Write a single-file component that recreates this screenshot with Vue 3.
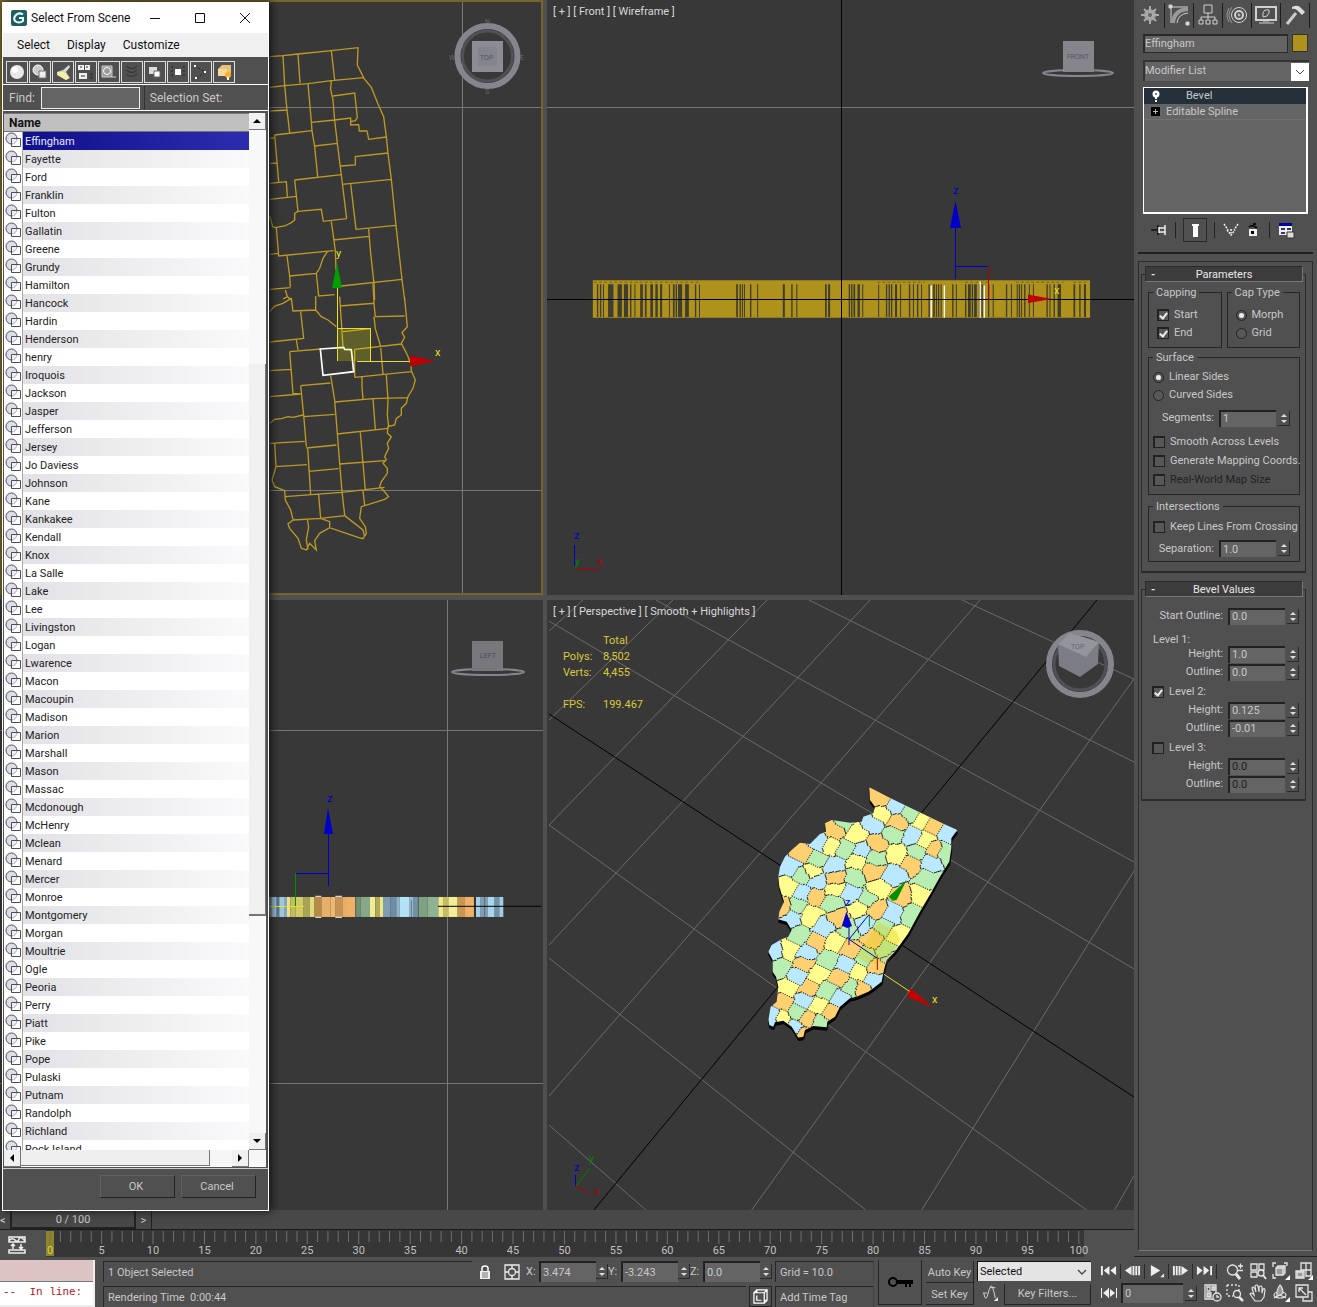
<script setup>
import { ref } from 'vue'

const names = [
  'Effingham', 'Fayette', 'Ford', 'Franklin', 'Fulton', 'Gallatin', 'Greene', 'Grundy', 'Hamilton', 'Hancock',
  'Hardin', 'Henderson', 'henry', 'Iroquois', 'Jackson', 'Jasper', 'Jefferson', 'Jersey', 'Jo Daviess', 'Johnson',
  'Kane', 'Kankakee', 'Kendall', 'Knox', 'La Salle', 'Lake', 'Lee', 'Livingston', 'Logan', 'Lwarence', 'Macon',
  'Macoupin', 'Madison', 'Marion', 'Marshall', 'Mason', 'Massac', 'Mcdonough', 'McHenry', 'Mclean', 'Menard',
  'Mercer', 'Monroe', 'Montgomery', 'Morgan', 'Moultrie', 'Ogle', 'Peoria', 'Perry', 'Piatt', 'Pike', 'Pope',
  'Pulaski', 'Putnam', 'Randolph', 'Richland', 'Rock Island'
]
const selected = ref('Effingham')
const frames = Array.from({ length: 101 }, (_, i) => i)
const frameX = (i) => (0.4 + i * 0.991).toFixed(2) + '%'

const levels = [
  { title: 'Level 1:', check: null, rows: [['Height:', '1.0'], ['Outline:', '0.0']] },
  { title: 'Level 2:', check: true, rows: [['Height:', '0.125'], ['Outline:', '-0.01']] },
  { title: 'Level 3:', check: false, rows: [['Height:', '0.0'], ['Outline:', '0.0']] }
]
const coords = [['X:', '3.474'], ['Y:', '-3.243'], ['Z:', '0.0']]

/* Gaps between extruded walls in the front wireframe: [x, width] */
const gaps = [
  [50, 4], [59, 4], [68, 3], [83, 16], [111, 13], [130, 12], [148, 4], [161, 3], [178, 8], [192, 5], [208, 8],
  [223, 7], [237, 6], [263, 3], [275, 5], [283, 4], [290, 12], [311, 11], [340, 4], [352, 3], [462, 5], [472, 4],
  [479, 3], [485, 3], [503, 4], [524, 3], [600, 6], [625, 4], [640, 3], [725, 5], [734, 6], [795, 4], [802, 4],
  [809, 5], [821, 7], [835, 3], [882, 3], [905, 4], [913, 4], [920, 4], [932, 6], [947, 3], [973, 4], [985, 3],
  [997, 4], [1009, 3], [1031, 4], [1045, 5], [1053, 3], [1059, 4], [1067, 3], [1101, 4], [1112, 3], [1139, 4],
  [1148, 8], [1159, 4], [1166, 8], [1180, 8], [1190, 3], [1207, 4], [1221, 3], [1260, 4], [1275, 3], [1292, 3],
  [1298, 4], [1305, 3], [1314, 4], [1328, 3], [1340, 3], [1380, 4], [1389, 3], [1401, 4], [1413, 10], [1460, 5],
  [1477, 4], [1491, 6]
]
/* Shaded strips of the left view: [x, width, colour] */
const strips = [
  [0, 12, '#7d9bb2'], [12, 12, '#99bfd8'], [24, 10, '#6c8ba3'], [34, 14, '#9fc8df'], [48, 9, '#86a6bb'],
  [57, 10, '#e8e28e'], [67, 15, '#c4bc5e'], [82, 25, '#d2ca68'], [107, 18, '#aaa552'], [125, 13, '#dedc7d'],
  [138, 22, '#b68a48'], [160, 28, '#e6b06a'], [188, 15, '#efb870'], [203, 20, '#c49355'], [223, 14, '#e8ae66'],
  [237, 26, '#efb067'], [263, 15, '#729072'], [278, 28, '#86a889'], [306, 16, '#f0ec93'], [322, 14, '#b0a955'],
  [336, 9, '#ede888'], [345, 22, '#7f9cb1'], [367, 18, '#6e8da4'], [385, 10, '#8fb4ca'], [395, 30, '#b2e2f5'],
  [425, 10, '#98bfd5'], [435, 16, '#7590a5'], [451, 28, '#7da183'], [479, 32, '#8fb391'], [511, 14, '#eeea90'],
  [525, 16, '#c4bb64'], [541, 28, '#f2ef96'], [569, 20, '#c99850'], [589, 29, '#efb067'], [618, 6, '#333333'],
  [624, 14, '#a4d0e7'], [638, 22, '#7e9fb5'], [660, 20, '#a7d6ec'], [680, 14, '#7292aa'], [694, 12, '#a2cfe4']
]

/* County centres on the extruded map */
const seeds = `o420,85 b465,105 g512,130 y545,148 o580,165 b625,185 y425,128 b400,160 o475,155 g460,190 b520,197
y555,210 o582,236 g615,245 o285,178 y350,192 o410,218 g310,150 y270,225 g315,235 b365,238 y470,250 g530,243
o515,278 b570,275 b238,212 o185,245 g230,268 b280,285 y350,270 g405,262 o395,300 b465,312 g560,325 b150,290
y215,300 g185,315 b230,335 o285,322 g345,318 y410,355 y535,370 o490,375 y285,355 b330,370 y145,345 b190,365
o222,372 g280,395 g385,385 b455,430 g515,430 o410,415 y355,415 g170,405 o130,410 b155,440 y210,435 b250,470
o295,440 y470,495 g430,470 g175,495 o230,512 y280,515 g330,475 o330,535 b370,460 o400,500 g440,540 g375,560
y355,605 b105,540 y145,535 b200,545 g265,565 b315,580 g120,590 o190,580 b172,615 y232,610 o300,620 o405,590
b400,625 y145,650 o205,655 g258,660 g335,650 o362,655 b300,685 b190,685 o130,695 y235,705 g170,725 o270,725
o200,745 b100,730 y125,740 b165,770 o185,790 g240,755 b455,560`
  .split(/\s+/)
  .map((s) => {
    const [x, y] = s.slice(1).split(',').map(Number)
    const dx = x - 388
    const dy = y - 30
    return { c: s[0], s: 0.86 * dx + 0.517 * dy, t: 0.904 * dy - 0.438 * dx }
  })
const fills = { o: '#ffd070', b: '#b9e8ff', g: '#b9eeb2', y: '#fffd8e' }

/* Square-ish counties: a fine lattice along the map's own axes, each node owned by the nearest centre */
const STEP = 4
const S0 = -120
const T0 = -20
const COLS = 124
const ROWS = 212
const owner = Array.from({ length: ROWS }, (_, r) =>
  Array.from({ length: COLS }, (_, c) => {
    const s = S0 + c * STEP
    const t = T0 + r * STEP
    let best = 0
    let min = Infinity
    seeds.forEach((p, i) => {
      const a = Math.abs(p.s - s)
      const b = Math.abs(p.t - t)
      const d = Math.max(a, b) + Math.min(a, b) * 0.1
      if (d < min) { min = d; best = i }
    })
    return best
  })
)
const areas = { o: '', b: '', g: '', y: '' }
let borders = ''
for (let r = 0; r < ROWS; r++) {
  let start = 0
  for (let c = 1; c <= COLS; c++) {
    if (c === COLS || owner[r][c] !== owner[r][start]) {
      areas[seeds[owner[r][start]].c] += `M${S0 + start * STEP} ${T0 + r * STEP}h${(c - start) * STEP + 1}v5h${-(c - start) * STEP - 1}z`
      start = c
    }
  }
}
for (let r = 1; r < ROWS; r++) {
  for (let c = 0; c < COLS; c++) {
    if (owner[r][c] === owner[r - 1][c]) continue
    let n = c
    while (n < COLS && owner[r][n] !== owner[r - 1][n]) n++
    borders += `M${S0 + c * STEP} ${T0 + r * STEP}h${(n - c) * STEP}`
    c = n
  }
}
for (let c = 1; c < COLS; c++) {
  for (let r = 0; r < ROWS; r++) {
    if (owner[r][c] === owner[r][c - 1]) continue
    let n = r
    while (n < ROWS && owner[n][c] !== owner[n][c - 1]) n++
    borders += `M${S0 + c * STEP} ${T0 + r * STEP}v${(n - r) * STEP}`
    r = n
  }
}
const stateOutline =
  '388,52 452,85 545,130 612,162 652,180 634,205 634,235 628,275 600,320 575,365 540,425 505,490 465,545 440,570 432,600 425,635 400,655 385,665 350,680 330,685 300,710 285,740 262,755 260,772 220,768 195,780 190,800 175,803 155,770 130,752 105,757 100,770 88,765 85,750 92,710 110,695 115,650 108,620 98,605 98,570 85,545 95,525 125,508 145,500 155,480 140,455 115,448 118,425 132,395 118,350 115,320 120,290 135,260 155,240 180,218 210,222 240,192 258,185 255,160 275,150 330,158 365,155 370,140 400,130 405,110 390,90'
</script>

<template>
  <div class="app">
    <div class="workspace">
      <main class="stage">
        <div class="views">
          <section class="view active" aria-label="Top">
            <svg viewBox="0 0 543 595" preserveAspectRatio="xMinYMin slice">
              <path d="M462.5 0V595M0 107.5H543M0 490.5H543" stroke="#777" fill="none" />
              <g fill="none" stroke="#bd9a24" stroke-width="4">
                <g transform="translate(268 0) scale(.3333)">
                  <path d="M5,170L45,167 90,162 190,152 270,143 268,195 288,235 310,262 330,312 347,350 355,410 360,460 370,538 384,676 402,838 410,900M5,262L50,257 120,251 190,242 288,233M45,167L50,257 57,330 65,398M90,162L96,250M190,152L200,240M120,251L130,365 132,392 140,440 149,530M190,242L188,268 195,300 200,360 208,430 220,525 236,656M195,288L260,279 268,352 262,362 248,365M130,367L200,360 248,354 248,375 272,374 274,393 297,393 302,418 355,411M140,438L208,430M5,333L57,330M20,405L132,392M5,415L18,414M20,405L32,545M5,490L27,489M5,550L55,545 58,590M5,598L85,589M80,540L220,524M80,540L90,634 160,628 166,664 236,656M218,498L262,495 262,470 360,459M222,553L370,538M248,552L264,688 384,676M90,634L80,640 80,660 70,668 50,678 22,683 14,680 5,648M25,683L32,768 197,752M190,664L202,752 204,810M196,720L302,709M302,687L308,760 318,850 320,900M5,763L30,760M57,768L65,828 67,862M65,828L145,820 155,805 165,775 178,755M145,820L152,888 200,884M5,868L67,863M52,870L58,890 45,897M58,890L70,900M220,858L402,838" />
                </g>
                <g transform="translate(268 300) scale(.3333)">
                  <path d="M5,35L20,18 45,10 70,-5 75,33 143,30 143,-12M143,30L160,50 180,60 205,80M98,35L107,115 5,126M85,118L90,150M65,155L160,147M65,155L75,280 98,282M5,212L68,208M5,290L98,282M98,257L187,249M98,257L107,345 115,440M188,227L200,300 215,490 222,575 230,645M107,350L200,343M5,370L20,358 40,356 60,350 75,352 105,345M5,430L110,424M20,430L24,500 117,494M115,444L205,435M119,444L128,585M122,514L212,506M24,500L12,540 20,560 50,572 52,600 68,630 75,658M52,590L220,577 350,562M152,584L158,655M75,660L158,655 230,647M215,18L318,10 322,50 410,48M215,-10L225,140M225,95L308,86M318,10L315,-50M410,-5L418,80 402,98 410,112 400,130 418,165 428,190 430,212 442,240 435,265 420,290 415,310 400,325 400,345 385,355 380,375 360,380 358,400 370,410 358,430 362,445 350,470 355,480 345,490 358,505 358,520 340,545 335,560 345,570 362,590 350,598 280,620 275,655 292,680 295,700 285,716 270,712 185,683 155,700 140,722 145,750 125,730 115,750 100,745 90,715 65,685 60,672 75,660M118,658L122,680 115,720 120,748M158,655L185,665 185,683M230,647L285,690 290,710M260,148L400,132M318,50L322,86 338,140 345,222M260,232L430,215M260,148L260,232M282,232L282,260 285,298M355,225L360,300 358,345 362,380M200,306L315,296 420,293M315,296L322,388M207,402L362,385M277,397L292,570M215,492L350,482M285,572L290,615" />
                  <path d="M157,147L227,142 230,148 250,149 257,215 165,226Z" stroke="#fff" stroke-width="5" />
                </g>
              </g>
              <path d="M337 328h34v33h-34z" fill="#ffff00" fill-opacity=".2" />
              <path d="M337.500 288V361M337 328.500H370.500V361M357 361.500H410" stroke="#e8e020" fill="none" />
              <path d="M337 263l5 25h-10z" fill="#00a000" />
              <path d="M410 355.500L435 361 410 366.500z" fill="#c00000" />
              <text x="336" y="257" fill="#e8e020">y</text>
              <text x="435" y="356" fill="#e8e020">x</text>
              <circle cx="487.500" cy="56" r="30" fill="none" stroke="#85858d" stroke-width="6" />
              <circle cx="487.500" cy="56" r="25" fill="none" stroke="#505056" stroke-width="3" />
              <path d="M472 41h31v31h-31z" fill="#8c8c94" />
              <path d="M478 47h19v19h-19z" fill="#84848c" />
              <text x="480" y="60" class="cube" fill="#55555c">TOP</text>
              <g class="cube" fill="#66666c"><text x="485" y="24">N</text><text x="485" y="94">S</text><text x="449" y="60">W</text><text x="520" y="60">E</text></g>
            </svg>
          </section>

          <section class="view" aria-label="Front">
            <svg viewBox="547 0 587 595" preserveAspectRatio="xMinYMin slice">
              <path d="M547 107.500H1134" stroke="#777" />
              <g transform="translate(580 170) scale(.338)">
                <path d="M38 326H1509V437H38z" fill="#ae921c" />
                <rect v-for="g in gaps" :key="g[0]" :x="g[0]" y="338" :width="g[1]" height="97" fill="#403e2e" />
                <path d="M42 332H350M880 332H1020M1140 332H1210M1290 332H1430M1460 332H1500" stroke="#6f6224" stroke-width="3" stroke-dasharray="8 7" />
                <path d="M1039 342V437M1078 342V437M1184 330V437M1196 342V437" stroke="#fff" stroke-width="4" />
              </g>
              <path d="M841.500 0V595M547 299.500H1134" stroke="#000" />
              <path d="M955.500 228V279M955 266.500H988" stroke="#0000c8" fill="none" />
              <path d="M988.500 266V300" stroke="#b00000" />
              <path d="M955.500 201l5.500 27h-11z" fill="#0000c8" />
              <path d="M1028 294.500L1052 299 1028 303z" fill="#c00000" />
              <text x="953" y="194" fill="#0000c8">z</text>
              <text x="1054" y="294" fill="#e8e020">x</text>
              <path d="M574.500 568V545" stroke="#0000c8" /><path d="M575 568.500H600" stroke="#b00000" /><path d="M574 568l4-6" stroke="#008000" />
              <text x="574" y="539" fill="#0000c8">z</text><text x="597" y="565" fill="#b00000">x</text><text x="575" y="565" fill="#008000">y</text>
              <ellipse cx="1078" cy="73" rx="35" ry="3" fill="none" stroke="#85858d" stroke-width="2" />
              <path d="M1063 41h31v31h-31z" fill="#85858b" />
              <text x="1067" y="59" class="cube" fill="#55555c">FRONT</text>
            </svg>
            <p class="caption">[ + ] [ Front ] [ Wireframe ]</p>
          </section>

          <section class="view" aria-label="Left">
            <svg viewBox="0 600 543 611" preserveAspectRatio="xMinYMin slice">
              <path d="M447.500 600V1211M0 730.500H543M0 1083.500H543" stroke="#777" fill="none" />
              <g transform="translate(268 600) scale(.3333)">
                <rect v-for="s in strips" :key="s[0]" :x="s[0]" y="891" :width="s[1]" height="60" :fill="s[2]" />
                <path d="M30 891V951M263 891V951M430 900V951M451 891V951M650 891V951" stroke="#444a4c" stroke-width="2" />
                <path d="M142 889H160M202 889H222M142 952H160M202 952H222" stroke="#fff" stroke-width="3" />
                <path d="M510 919H820" stroke="#000" stroke-width="3" />
              </g>
              <path d="M268 906.500H304" stroke="#e8e020" />
              <path d="M328.500 833V886M328 873.500H295" stroke="#0000c8" fill="none" />
              <path d="M295.500 873V906" stroke="#009000" />
              <path d="M328 808l5 26h-9z" fill="#0000c8" />
              <text x="327" y="802" fill="#0000c8">z</text>
              <ellipse cx="488" cy="672" rx="36" ry="3" fill="none" stroke="#85858d" stroke-width="2" />
              <path d="M472 641h31v30h-31z" fill="#77777c" />
              <text x="480" y="658" class="cube" fill="#4a4a50">LEFT</text>
            </svg>
          </section>

          <section class="view" aria-label="Perspective">
            <svg viewBox="547 600 587 611" preserveAspectRatio="xMinYMin slice">
              <path fill="none" stroke="#6b6b6b" d="M962 600L1134 679M809 600L1134 762M656 600L1134 862M549 621L1134 969M549 825L1088 1211M549 958L867 1211M549 1125L647 1211M549 631L583 600M549 720L673 600M549 825L767 600M549 945L870 600M549 1096L980 600M751 1211L1134 679M921 1211L1134 871M1114 1211L1134 1176" />
              <path fill="none" stroke="#000" d="M549 714L1134 1097M593 1211L1097 600" />
              <defs><clipPath id="state"><polygon :points="stateOutline" /></clipPath></defs>
              <g transform="translate(740 770) scale(.3333)">
                <polygon :points="stateOutline" fill="#050505" stroke="#050505" stroke-width="3" transform="translate(1 9)" />
                <g clip-path="url(#state)">
                  <g transform="matrix(.9 .436 -.515 .857 388 30)">
                    <path v-for="(d, k) in areas" :key="k" :d="d" :fill="fills[k]" />
                    <path :d="borders" fill="none" stroke="#222" stroke-width="3" stroke-dasharray="3 4" />
                  </g>
                </g>
                <path d="M415 455L470 485 480 510 440 580 380 580 350 560z" fill="#d8c800" fill-opacity=".3" />
                <path d="M327 508L387 434M327 508L412 565M327 525V470" stroke="#0000b0" stroke-width="3" fill="none" />
                <path d="M388 434V470" stroke="#008000" stroke-width="3" />
                <path d="M412 565V600" stroke="#b00000" stroke-width="3" />
                <path d="M432 613L510 665" stroke="#e8e020" stroke-width="3" />
                <path d="M500 330L446 380 458 392 470 390z" fill="#009000" />
                <path d="M319 425L336 468 322 474 306 467z" fill="#0000c8" />
                <path d="M512 655L578 712 502 680z" fill="#c80000" />
              </g>
              <text x="845" y="906" fill="#0000c8">z</text>
              <text x="932" y="1003" fill="#e8e020">x</text>
              <path d="M575.500 1186V1175" stroke="#0000c8" /><path d="M576 1186l14-18" stroke="#008000" /><path d="M576 1186l14 8" stroke="#b00000" />
              <text x="574" y="1171" fill="#0000c8">z</text><text x="589" y="1162" fill="#008000">y</text><text x="594" y="1195" fill="#b00000">x</text>
              <circle cx="1080" cy="664" r="31" fill="none" stroke="#85858d" stroke-width="6" />
              <circle cx="1080" cy="664" r="26" fill="none" stroke="#505056" stroke-width="3" />
              <path d="M1058 644L1070 633 1099 642 1098 664 1080 677 1059 666z" fill="#7c7c84" />
              <path d="M1058 644L1070 633 1099 642 1086 657z" fill="#94949c" />
              <text x="1071" y="649" class="cube" fill="#66666e">TOP</text>
            </svg>
            <p class="caption">[ + ] [ Perspective ] [ Smooth + Highlights ]</p>
            <dl class="stats">
              <dt></dt><dd>Total</dd>
              <dt>Polys:</dt><dd>8,502</dd>
              <dt>Verts:</dt><dd>4,455</dd>
              <dt class="fps">FPS:</dt><dd class="fps">199.467</dd>
            </dl>
          </section>
        </div>

        <div class="slider">
          <button class="step">&lt;</button>
          <button class="thumb">0 / 100</button>
          <button class="step">&gt;</button>
        </div>

        <div class="trackbar">
          <button class="curve" aria-label="Open mini curve editor">
            <svg width="18" height="18" viewBox="0 0 18 18" fill="none" stroke="#eee" stroke-width="1.500"><path d="M1 1h16v5H1zM1 14h16v3H1zM1 5q3-4 6-1t4-1 6 2M5 13V8M3 10l2-2 2 2M13 8v5M11 11l2 2 2-2" /></svg>
          </button>
          <svg class="ruler">
            <rect x="0" y="1" width="8" height="25" fill="#8d8526" />
            <line v-for="i in frames" :key="i" :x1="frameX(i)" :x2="frameX(i)" y1="1" :y2="i % 5 ? 12 : 14" stroke="#707070" />
            <text v-for="i in 21" :key="'t' + i" :x="frameX((i - 1) * 5)" y="24" text-anchor="middle" :fill="i === 1 ? '#d8cf50' : '#c0c0c0'">{{ (i - 1) * 5 }}</text>
          </svg>
        </div>
      </main>

      <aside class="panel">
        <nav class="tabs">
          <button aria-label="Create"><svg viewBox="0 0 22 22"><circle cx="11" cy="11" r="6" fill="#9a9a9a" /><path d="M11 2v18M2 11h18M5 5l12 12M17 5L5 17" stroke="#aaa" stroke-width="2" /><circle cx="11" cy="11" r="2" fill="#666" /></svg></button>
          <button aria-label="Modify"><svg viewBox="0 0 22 22" fill="none" stroke="#d0d0d0"><path d="M3 3v16M3 3h17" /><path d="M5 19Q6 6 20 5" stroke-width="4" stroke="#999" /><path d="M9 19Q10 10 20 9" /><path d="M1 1h3v3H1zM18 18h3v3h-3z" fill="#ddd" /></svg></button>
          <button aria-label="Hierarchy"><svg viewBox="0 0 22 22" fill="none" stroke="#d0d0d0"><path d="M7 1h8v8H7zM11 9v6M4 16v-3h14v3M2 16h4v4H2zM9 16h4v4H9zM16 16h4v4h-4z" /></svg></button>
          <button aria-label="Motion"><svg viewBox="0 0 22 22" fill="none" stroke="#d0d0d0"><circle cx="13" cy="11" r="7.500" /><circle cx="13" cy="11" r="4" stroke-width="2" /><circle cx="13" cy="11" r="1" /><path d="M6 3q-6 8 0 16M3 4q-4 7 0 14" stroke="#999" /></svg></button>
          <button aria-label="Display"><svg viewBox="0 0 22 22" fill="none" stroke="#d0d0d0"><path d="M1 3h20v13H1z" stroke-width="2" /><path d="M4 19h15M8 17h6" /><path d="M8 13V9q1-4 6-3v3q-1 4-6 4z" /></svg></button>
          <button aria-label="Utilities"><svg viewBox="0 0 22 22"><path d="M3 20L12 9" stroke="#ccc" stroke-width="3" /><path d="M8 3q6-3 9 1l4 4-3 3-4-4q-3-3-6-2z" fill="#ddd" /></svg></button>
        </nav>
        <div class="name-row">
          <input class="name" value="Effingham" aria-label="Object name" />
          <button class="swatch" aria-label="Object colour"></button>
        </div>
        <div class="drop modlist">
          <select aria-label="Modifier list"><option>Modifier List</option></select>
          <svg viewBox="0 0 18 18" fill="none" stroke="#444"><path d="M5 7l4 4 4-4" /></svg>
        </div>
        <ul class="stack">
          <li class="on"><svg width="10" height="12" viewBox="0 0 10 12"><circle cx="5" cy="4" r="3.500" fill="#fff" /><path d="M5 7v2M5 10v2" stroke="#fff" stroke-width="2" /><circle cx="5" cy="4" r="1" fill="#555" /></svg><span>Bevel</span></li>
          <li><svg width="10" height="10" viewBox="0 0 10 10"><path d="M0 0h9v9H0z" /><path d="M4.500 2v5M2 4.500h5" stroke="#bbb" /></svg><span>Editable Spline</span></li>
        </ul>
        <div class="stack-tools">
          <button aria-label="Pin stack"><svg viewBox="0 0 18 18" fill="none" stroke="#eee"><path d="M1 9h6M8 4v10" stroke="#111" stroke-width="1.500" /><path d="M9 6v6M9 7h6M9 11h6M15 4v10" stroke-width="1.500" /></svg></button>
          <i></i>
          <button class="down" aria-label="Show end result"><svg viewBox="0 0 18 18"><path d="M6 3h7v2h-1v11H7V5H6z" fill="#fff" /></svg></button>
          <i></i>
          <button aria-label="Make unique"><svg viewBox="0 0 18 18" fill="none" stroke="#eee"><path d="M2 3l4 6M16 3l-4 6M5 9l4 5 4-5M9 8v4" stroke-dasharray="2 1" stroke-width="1.500" /></svg></button>
          <button aria-label="Remove modifier"><svg viewBox="0 0 18 18"><path d="M5 8h8v7H5z" fill="#eee" /><path d="M5 6q4-3 8 1M9 3h3" stroke="#111" fill="none" stroke-width="2" /><path d="M7 10v3h3v-3z" /></svg></button>
          <i></i>
          <button aria-label="Configure modifier sets"><svg viewBox="0 0 18 18"><path d="M2 2h13v12H2z" fill="#eee" /><path d="M2 2h13v3H2z" fill="#0000a0" /><path d="M4 7h4v2H4zM4 11h4v2H4zM10 7h4v2h-4z" fill="#336" /><path d="M10 11h7v6h-7z" fill="#ddd" stroke="#333" /></svg></button>
        </div>

        <div class="rollouts">
          <section class="rollout">
            <h2><b>-</b>Parameters</h2>
            <div class="pair">
              <fieldset>
                <legend>Capping</legend>
                <label class="opt"><input type="checkbox" checked />Start</label>
                <label class="opt"><input type="checkbox" checked />End</label>
              </fieldset>
              <fieldset>
                <legend>Cap Type</legend>
                <label class="opt"><input type="radio" name="cap" checked />Morph</label>
                <label class="opt"><input type="radio" name="cap" />Grid</label>
              </fieldset>
            </div>
            <fieldset class="wide">
              <legend>Surface</legend>
              <label class="opt"><input type="radio" name="side" checked />Linear Sides</label>
              <label class="opt"><input type="radio" name="side" />Curved Sides</label>
              <div class="num tall"><label for="seg">Segments:</label><input id="seg" value="1" /><span class="spin"></span></div>
              <label class="opt mid"><input type="checkbox" />Smooth Across Levels</label>
              <label class="opt mid"><input type="checkbox" />Generate Mapping Coords.</label>
              <label class="opt mid off"><input type="checkbox" disabled />Real-World Map Size</label>
            </fieldset>
            <fieldset class="wide last">
              <legend>Intersections</legend>
              <label class="opt mid"><input type="checkbox" />Keep Lines From Crossing</label>
              <div class="num high"><label for="sep">Separation:</label><input id="sep" value="1.0" /><span class="spin"></span></div>
            </fieldset>
          </section>

          <section class="rollout bevel">
            <h2><b>-</b>Bevel Values</h2>
            <div class="num"><label for="so">Start Outline:</label><input id="so" value="0.0" /><span class="spin"></span></div>
            <div v-for="(l, k) in levels" :key="l.title" class="level">
              <label v-if="l.check !== null" class="opt"><input type="checkbox" :checked="l.check" />{{ l.title }}</label>
              <p v-else>{{ l.title }}</p>
              <div v-for="r in l.rows" :key="r[0]" class="num" :class="{ off: l.check === false }">
                <label :for="r[0] + k">{{ r[0] }}</label><input :id="r[0] + k" :value="r[1]" /><span class="spin"></span>
              </div>
            </div>
          </section>
        </div>
      </aside>
    </div>

    <footer class="status">
      <div class="listener"><div class="macro"></div><pre>--  In line:</pre></div>
      <div class="info">
        <div class="line">
          <p class="box grow">1 Object Selected</p>
          <button class="flat" aria-label="Selection lock"><svg viewBox="0 0 16 16"><path d="M5 7V4q0-2 3-2t3 2v3" fill="none" stroke="#fff" stroke-width="1.500" /><path d="M3 7h10v8H3z" fill="#eee" /><path d="M5 9h6M5 11h6M5 13h6" stroke="#777" /></svg></button>
          <button class="flat" aria-label="Absolute mode"><svg viewBox="0 0 16 16" fill="none" stroke="#eee" stroke-width="1.300"><path d="M1 1h14v14H1zM1 8h4M11 8h4M8 1v4M8 11v4" /><circle cx="8" cy="8" r="3.500" /></svg></button>
          <div v-for="c in coords" :key="c[0]" class="num coord"><label :for="'c' + c[0]">{{ c[0] }}</label><input :id="'c' + c[0]" :value="c[1]" /><span class="spin"></span></div>
          <p class="box cell">Grid = 10.0</p>
        </div>
        <div class="line">
          <p class="box grow">Rendering Time&nbsp; 0:00:44</p>
          <button class="sunk" aria-label="Communication center"><svg viewBox="0 0 16 16" fill="none" stroke="#fff" stroke-width="1.300"><path d="M1 4h11v11H1zM4 4V1h11v11h-3M1 4l3-3M12 4l3-3M12 15l3-3M4 7v5h5" /></svg></button>
          <button class="box cell">Add Time Tag</button>
        </div>
      </div>
      <button class="key" aria-label="Set keys"><svg width="26" height="12" viewBox="0 0 26 12" fill="none" stroke="#000" stroke-width="2"><circle cx="5" cy="6" r="4" /><path d="M9 5h15v2H9M18 7v4M22 7v4" /></svg></button>
      <div class="keys">
        <button>Auto Key</button>
        <button>Set Key</button>
      </div>
      <div class="filters">
        <div class="drop sel">
          <select aria-label="Key set"><option>Selected</option></select>
          <svg viewBox="0 0 18 18" fill="none" stroke="#444" stroke-width="1.300"><path d="M5 7l4 4 4-4" /></svg>
        </div>
        <div class="line">
          <button class="flat" aria-label="Tangent type"><svg viewBox="0 0 18 18" fill="none" stroke="#ddd"><path d="M1 9h5M2 9q2 12 5 0t5-6 3 12M9 3h6" /><path d="M18 14v4h-4z" fill="#fff" /></svg></button>
          <button class="kf">Key Filters...</button>
        </div>
      </div>
      <div class="play">
        <div class="line">
          <button aria-label="Go to start"><svg viewBox="0 0 18 14" fill="#eee"><path d="M1 2h2v10H1zM10 2v10L4 7zM17 2v10l-6-5z" /></svg></button>
          <button aria-label="Previous frame"><svg viewBox="0 0 18 14" fill="#eee"><path d="M8 2v10L1 7zM9 2h2v10H9zM12 2h2v10h-2zM15 2h2v10h-2z" /></svg></button>
          <button aria-label="Play"><svg viewBox="0 0 18 14" fill="#eee"><path d="M3 1l10 6-10 6zM17 10v4h-4z" /></svg></button>
          <button aria-label="Next frame"><svg viewBox="0 0 18 14" fill="#eee"><path d="M10 2v10l7-5zM7 2h2v10H7zM4 2h2v10H4zM1 2h2v10H1z" /></svg></button>
          <button aria-label="Go to end"><svg viewBox="0 0 18 14" fill="#eee"><path d="M15 2h2v10h-2zM8 2v10l6-5zM1 2v10l6-5z" /></svg></button>
        </div>
        <div class="line">
          <button aria-label="Key mode"><svg viewBox="0 0 18 14" fill="#eee"><path d="M1 2h1v10H1zM16 2h1v10h-1zM8 3v8L3 7zM10 3v8l5-4zM8 2h1v10H8z" /></svg></button>
          <div class="num frame"><input value="0" aria-label="Current frame" /><span class="spin"></span></div>
          <button class="time" aria-label="Time configuration"><svg viewBox="0 0 18 18" fill="none" stroke="#e4e4e4" stroke-width="1.300"><path d="M1 1h11v14H1zM3 3h3v4H3z" /><path d="M8 3h3v3H8zM3 9h4v4H3z" fill="#bbb" /><circle cx="13" cy="13" r="4" fill="#555" /><path d="M13 11v2h2" /></svg></button>
        </div>
      </div>
      <div class="nav">
        <button aria-label="Zoom"><svg viewBox="0 0 18 18" fill="none" stroke="#e4e4e4" stroke-width="1.300"><circle cx="6.500" cy="8" r="5" /><path d="M10 12l4 5" stroke-width="3" /><path d="M12 4h5M14.500 1.500v5M12 8.500h5" /></svg></button>
        <button aria-label="Zoom all"><svg viewBox="0 0 18 18" fill="none" stroke="#e4e4e4" stroke-width="1.300"><path d="M2 2h6v6H2zM10 2h5v6h-5zM2 10h6v5H2z" /><circle cx="12" cy="11" r="3" fill="#555" /><path d="M14 13l3 4" stroke-width="2" /></svg></button>
        <button aria-label="Zoom extents"><svg viewBox="0 0 18 18" fill="none" stroke="#e4e4e4" stroke-width="1.300"><path d="M1 5V1h3M12 1h3v3M1 12v4h3" /><path d="M4 6l2-2h7v7l-2 2H4z" fill="#999" /><path d="M4 6h7v7M11 6l2-2" /><path d="M18 13v5h-5z" fill="#fff" stroke="none" /></svg></button>
        <button aria-label="Zoom extents all"><svg viewBox="0 0 18 18" fill="none" stroke="#e4e4e4" stroke-width="1.300"><path d="M6 1h10v7H6zM1 9h8v7H1zM11 1v14M9 8h7v6h-5" /><path d="M2 10h6v5H2z" fill="#999" /><path d="M18 13v5h-5z" fill="#fff" stroke="none" /></svg></button>
        <button aria-label="Zoom region"><svg viewBox="0 0 18 18" fill="none" stroke="#e4e4e4" stroke-width="1.300"><path d="M1 1h12v6M1 1v11h6" stroke-dasharray="2 2" /><circle cx="11" cy="10" r="3.500" /><path d="M13 13l4 4" stroke-width="2.500" /></svg></button>
        <button aria-label="Pan"><svg viewBox="0 0 18 18" fill="none" stroke="#e4e4e4" stroke-width="1.200"><path d="M6 17L1 10q1-2 4 1L3 4q1-2 3 1l1 3-1-6q2-2 3 0l1 6V3q2-2 3 0v6l1-4q2-1 2 1l-1 7-3 4z" /></svg></button>
        <button aria-label="Orbit"><svg viewBox="0 0 18 18" fill="none" stroke="#e4e4e4" stroke-width="1.200"><path d="M8 2v9M8 11l-6 3M8 11l6 3" /><ellipse cx="8" cy="11" rx="6" ry="3" /><path d="M8 1q-4 5-3 11 6-2 6-3 0-5-3-8z" fill="#999" /><path d="M18 13v5h-5z" fill="#fff" stroke="none" /></svg></button>
        <button aria-label="Maximize viewport"><svg viewBox="0 0 18 18" fill="none" stroke="#e4e4e4" stroke-width="1.300"><path d="M1 1h12v12H1zM13 8h4v9H8v-4M4 4l7 7M4 8V4h4" /></svg></button>
      </div>
    </footer>

    <div class="dialog" role="dialog" aria-label="Select From Scene">
      <header class="title">
        <svg class="logo" viewBox="0 0 16 16"><rect width="16" height="16" rx="2" fill="#1f5f62" /><path d="M12 4.500Q8 2 5 5t-1 6q4 3 8 0V8H8" fill="none" stroke="#e6ffff" stroke-width="2" /></svg>
        <span>Select From Scene</span>
        <button aria-label="Minimize"><svg viewBox="0 0 12 12"><path d="M1 6.500h10" /></svg></button>
        <button aria-label="Maximize"><svg viewBox="0 0 12 12"><path d="M1.500 1.500h9v9h-9z" /></svg></button>
        <button aria-label="Close"><svg viewBox="0 0 12 12"><path d="M1 1l10 10M11 1L1 11" /></svg></button>
      </header>
      <nav class="menu"><button>Select</button><button>Display</button><button>Customize</button></nav>
      <div class="tools">
        <button aria-label="Geometry"><svg viewBox="0 0 20 20"><circle cx="10" cy="10" r="7" fill="#e8e8e8" /><circle cx="8" cy="8" r="3" fill="#fff" /></svg></button>
        <button aria-label="Shapes"><svg viewBox="0 0 20 20"><circle cx="8" cy="8" r="5" fill="#c8ccd0" stroke="#fff" /><path d="M9 9h7v7H9z" fill="#eee" stroke="#777" /></svg></button>
        <button aria-label="Lights"><svg viewBox="0 0 20 20"><path d="M4 10l6-2 6-5 1 2-4 5 4 6-4 2-9-5z" fill="#d4d4d4" /><path d="M5 10l6 0 5 6-3 2-8-5z" fill="#f5f0a0" /></svg></button>
        <button aria-label="Cameras"><svg viewBox="0 0 20 20"><path d="M2 3h6v5H2zM9 3h5v5H9zM3 11h8v6H3z" fill="#eee" /><path d="M4 5h2M10 5h2M5 14h4M13 13l3-2v6l-3-2" stroke="#333" fill="none" /></svg></button>
        <button aria-label="Helpers"><svg viewBox="0 0 20 20"><path d="M3 4h10v11H3zM13 15h4" fill="#999" stroke="#ccc" /><circle cx="8" cy="9" r="3.500" fill="none" stroke="#fff" /></svg></button>
        <button aria-label="Space warps"><svg viewBox="0 0 20 20" fill="none" stroke="#303030"><path d="M4 4q6 5 11 0M4 8q6 5 11 0M4 12q6 5 11 0" /></svg></button>
        <button aria-label="Groups"><svg viewBox="0 0 20 20"><path d="M4 5h8v7H4z" fill="#ddd" /><path d="M9 9h6v6H9z" fill="#fff" stroke="#666" /></svg></button>
        <button aria-label="External references"><svg viewBox="0 0 20 20"><path d="M4 4v12M16 4v12" stroke="#222" stroke-dasharray="2 2" /><path d="M7 7h6v6H7z" fill="#fff" /></svg></button>
        <button aria-label="Bones"><svg viewBox="0 0 20 20"><path d="M4 4l10 6-9 7" stroke="#222" fill="none" stroke-dasharray="2 2" /><path d="M3 3h2v2H3zM13 9h2v2h-2zM4 15h2v2H4z" fill="#fff" /></svg></button>
        <button aria-label="Containers"><svg viewBox="0 0 20 20"><path d="M4 7l4-4h9v8l-3 3H4z" fill="#e8c078" /><path d="M4 7h9v7H4z" fill="#f4d8a0" /><circle cx="14" cy="13" r="3" fill="#ffb020" /><path d="M14 15v3" stroke="#fff" stroke-width="2" /></svg></button>
      </div>
      <div class="find">
        <label for="find">Find:</label><input id="find" />
        <span>Selection Set:</span>
      </div>
      <div class="list">
        <div class="scroll">
          <div class="head">Name</div>
          <ul>
            <li v-for="n in names" :key="n" :class="{ on: n === selected }" @click="selected = n">
              <svg width="17" height="18" viewBox="0 0 17 18"><circle cx="6.500" cy="6.500" r="5.500" fill="#dcdfe6" stroke="#4c505c" /><path d="M6.500 6.500h9v8h-9z" fill="#fff" fill-opacity=".5" stroke="#4c505c" /></svg>
              <span>{{ n }}</span>
            </li>
          </ul>
        </div>
        <div class="vbar">
          <button aria-label="Scroll up"><svg viewBox="0 0 10 10"><path d="M1 7l4-4 4 4z" /></svg></button>
          <div class="vtrack"><div class="vthumb"></div></div>
          <button aria-label="Scroll down"><svg viewBox="0 0 10 10"><path d="M1 3l4 4 4-4z" /></svg></button>
        </div>
      </div>
      <div class="hbar">
        <button aria-label="Scroll left"><svg viewBox="0 0 10 10"><path d="M7 1L3 5l4 4z" /></svg></button>
        <div class="hthumb"></div>
        <button aria-label="Scroll right"><svg viewBox="0 0 10 10"><path d="M3 1l4 4-4 4z" /></svg></button>
      </div>
      <footer class="actions"><button>OK</button><button>Cancel</button></footer>
    </div>
  </div>
</template>

<style>
body { margin: 0; background: #505050; }
</style>

<style scoped>
* { box-sizing: border-box; }
.app {
  position: relative;
  display: flex;
  flex-direction: column;
  min-height: 100vh;
  background: #505050;
  color: #c8c8c8;
  font: 11px/14px Roboto, "Liberation Sans", sans-serif;
}
button, input, select { font: inherit; color: inherit; margin: 0; padding: 0; border: 0; border-radius: 0; background: none; }
input, select { appearance: none; min-width: 0; }
p, ul, dl, dd, h2, pre, fieldset { margin: 0; padding: 0; }
ul { list-style: none; }
svg { display: block; }

.workspace { flex: 1; display: flex; }
.stage { flex: 1; min-width: 0; display: flex; flex-direction: column; }
.views {
  flex: 1;
  display: grid;
  grid-template-columns: 543fr 587fr;
  grid-template-rows: 595fr 611fr;
  gap: 5px 4px;
}
.view { position: relative; min-height: 0; overflow: hidden; background: #383838; }
.view > svg { position: absolute; inset: 0; width: 100%; height: 100%; }
.view.active::after { content: ""; position: absolute; inset: 0; border: 2px solid #76652a; }
.cube { font-size: 7px; }
.caption { position: absolute; top: 5px; left: 6px; color: #d8d8d8; }
.stats {
  position: absolute;
  top: 33px;
  left: 16px;
  display: grid;
  grid-template-columns: 40px auto;
  line-height: 16px;
  color: #d8c93a;
}
.stats .fps { margin-top: 16px; }

.slider { display: flex; height: 19px; background: #484848; }
.slider button { padding-top: 3px; }
.slider .step { width: 16px; border-right: 1px solid #222; }
.slider .step:first-child { width: 11px; text-align: left; }
.slider .thumb { width: 125px; border: 1px solid #222; border-width: 0 2px 2px 1px; }
.trackbar { display: flex; height: 28px; padding-right: 50px; border-top: 1px solid #1c1c1c; }
.curve { width: 46px; padding: 2px 0 0 8px; }
.ruler { flex: 1; min-width: 0; height: 27px; background: #363636; overflow: visible; }

.panel { flex: none; width: 183px; padding-bottom: 4px; border-bottom: 1px solid #222; }
.tabs { display: flex; height: 28px; padding: 3px 0 0 2px; }
.tabs button { width: 29px; padding: 0 3px 2px; border-right: 1px solid #1c1c1c; }
.tabs svg { width: 22px; height: 22px; }
.name-row { display: flex; gap: 4px; margin: 6px 9px 0; }
.name { flex: 1; height: 19px; padding: 0 0 2px; background: #646464; border: 1px solid #2a2a2a; border-width: 2px 1px 1px 2px; }
.swatch { width: 16px; height: 18px; background: #ae921c; border: 1px solid #333; }
.drop { display: grid; grid-template-columns: minmax(0, 1fr) 18px; }
.drop select { grid-area: 1 / 1 / 2 / 3; }
.drop svg { grid-area: 1 / 2; width: 18px; height: 18px; pointer-events: none; align-self: center; }
.modlist { margin: 7px 8px 0 9px; height: 21px; background: #646464; border-top: 2px solid #333; border-left: 2px solid #333; }
.modlist select { padding-bottom: 2px; }
.modlist svg { background: #fff; }
.stack { height: 127px; margin: 6px 9px 0; background: #646464; border: 2px solid #fff; border-width: 1px 2px 2px 1px; }
.stack li { display: flex; align-items: center; height: 16px; padding-left: 7px; border-bottom: 1px solid #707070; }
.stack li span { margin: 1px 0 0 5px; }
.stack li.on { background: #23303a; border-color: #23303a; }
.stack li.on span { margin-left: 25px; }
.stack-tools { display: flex; align-items: center; gap: 4px; height: 38px; padding: 0 5px 8px 12px; border-bottom: 2px solid #202020; margin: 2px 4px 7px; }
.stack-tools button { width: 18px; height: 18px; flex: none; }
.stack-tools .down { height: 24px; width: 24px; padding: 2px; border: 1px solid #2a2a2a; }
.stack-tools i { width: 1px; height: 16px; background: #222; margin: 0 3px; }

.rollouts { margin: 0 4px; padding: 4px 6px 4px 2px; height: calc(100% - 262px); border: 1px solid #2c2c2c; border-bottom-color: #777; }
.rollout { margin-top: 8px; padding: 0 5px 9px 6px; border: 2px solid #2c2c2c; border-width: 1px 1px 2px; }
.rollout h2 { position: relative; margin: -9px -3px 4px -3px; height: 16px; font: inherit; text-align: center; line-height: 15px; color: #e8e8e8; background: #3c3c3c; border: 1px solid #666; border-color: #2c2c2c #777 #777 #2c2c2c; }
.rollout h2 b { position: absolute; left: 5px; }
.pair { display: flex; gap: 5px; }
.pair fieldset { flex: 1; padding: 7px 0 5px 4px; margin-bottom: 3px; }
fieldset { min-width: 0; border: 1px solid #262626; padding: 4px 0 5px 4px; margin-bottom: 5px; }
fieldset.last { padding-bottom: 0; margin-bottom: 0; }
legend { margin-left: 0; padding: 0 3px; height: 13px; line-height: 13px; }
.opt { display: flex; align-items: center; gap: 5px; height: 18px; padding-left: 4px; white-space: nowrap; }
.wide .opt { padding-left: 0; }
.opt.mid { height: 19px; }
.opt input { flex: none; position: relative; width: 12px; height: 12px; background: #585858; border: 1px solid #222; border-width: 2px 1px 1px 2px; }
.opt input[type="radio"] { width: 11px; height: 11px; border-radius: 50%; border-width: 1px; }
.opt input[type="checkbox"]:checked::before { content: ""; position: absolute; left: 2px; top: 0; width: 3px; height: 6px; border: solid #eee; border-width: 0 2px 2px 0; transform: rotate(38deg); }
.opt input[type="radio"]:checked::before { content: ""; position: absolute; inset: 2px; border-radius: 50%; background: #eee; }
.off { color: #222; }
.num { display: flex; align-items: center; justify-content: flex-end; height: 18px; padding-right: 9px; }
.num.tall { height: 28px; }
.num.high { height: 25px; }
.num label { margin-right: 5px; color: #c8c8c8; }
.num input { width: 57px; height: 17px; padding: 0 0 1px 2px; background: #646464; border: solid #222; border-width: 2px 0 0 2px; }
.spin { position: relative; width: 12px; height: 15px; margin-left: 2px; border: solid #2a2a2a; border-width: 0 1px 1px 0; }
.spin::before, .spin::after { content: ""; position: absolute; left: 3px; border: 3px solid transparent; }
.spin::before { top: 3px; border-top: 0; border-bottom-color: #ddd; }
.spin::after { bottom: 2px; border-top-color: #ddd; border-bottom: 0; }
.bevel { margin-top: 16px; padding-bottom: 6px; }
.bevel h2 { margin-bottom: 10px; }
.bevel .num { padding-right: 1px; }
.level p { height: 20px; padding: 8px 0 0 5px; }
.level .opt { margin-top: 2px; }

.status { display: flex; height: 50px; padding-right: 4px; }
.listener { width: 95px; margin-top: 3px; border: solid #eee; border-width: 0 2px 2px 0; }
.macro { height: 22px; background: #dcc4c4; border-bottom: 1px solid #777; }
.listener pre { height: 23px; padding-left: 3px; font: 11px/20px "Liberation Mono", monospace; color: #c01020; background: #fff; }
.info { flex: 1; min-width: 0; display: flex; flex-direction: column; gap: 4px; padding: 4px 0 0 8px; }
.line { display: flex; align-items: center; }
.box { height: 21px; line-height: 21px; padding-left: 4px; text-align: left; border: solid #262626; border-width: 1px 0 0 1px; }
.grow { flex: 1; min-width: 0; white-space: nowrap; }
.cell { flex: none; width: 99px; margin-left: 3px; border-right: 1px solid #444; }
.flat { flex: none; width: 27px; height: 20px; padding: 1px 6px 1px 5px; }
.sunk { width: 23px; height: 21px; padding: 2px 3px; border: 1px solid #222; margin-left: 3px; }
.coord { flex: none; padding: 0; height: 21px; }
.coord label { width: 11px; margin: 0 2px 0 0; }
.coord input { height: 21px; }
.coord .spin { margin-left: 0; }
.key { flex: none; width: 44px; margin: 3px 4px 2px; padding-left: 9px; border: 1px solid #262626; border-width: 0 1px 1px; }
.keys { flex: none; display: flex; flex-direction: column; width: 48px; margin: 4px 3px 2px 0; }
.keys button { flex: 1; padding-top: 2px; border: 1px solid #262626; border-width: 0 1px 1px 0; white-space: nowrap; }
.filters { flex: none; width: 114px; }
.sel { height: 20px; margin-top: 4px; background: #e4e4e4; color: #111; border-top: 1px solid #111; border-left: 1px solid #111; }
.sel select { padding-left: 2px; }
.filters .line { height: 24px; }
.kf { flex: 1; height: 21px; margin-top: 2px; border: 1px solid #262626; border-width: 0 1px 1px 1px; }
.play { flex: none; width: 126px; margin-left: 6px; padding-top: 3px; }
.play .line { height: 22px; }
.play button { width: 24px; padding: 0 3px; border-right: 1px solid #2a2a2a; height: 15px; }
.play .frame { padding: 0; height: 22px; }
.play .frame input { width: 62px; height: 20px; }
.play .line + .line button { border: 0; }
.play .line .time { width: 18px; height: 18px; padding: 0; margin-left: 7px; }
.nav { flex: none; display: grid; grid-template-columns: repeat(4, 18px); gap: 4px 5px; align-content: start; margin-left: 3px; padding-top: 5px; }
.nav button { width: 18px; height: 18px; }

.dialog {
  position: absolute;
  top: 2px;
  left: 2px;
  bottom: 96px;
  width: 267px;
  display: flex;
  flex-direction: column;
  background: #505050;
  border: 1px solid #fff;
  box-shadow: 2px 0 8px #111;
}
.title { flex: none; display: flex; align-items: center; height: 30px; padding-left: 8px; background: #fff; color: #111; font-size: 12px; }
.logo { width: 16px; height: 16px; margin-right: 4px; }
.title span { flex: 1; white-space: nowrap; }
.title button { width: 45px; height: 28px; padding-left: 16px; }
.title button svg { width: 12px; height: 12px; fill: none; stroke: #111; }
.menu { display: flex; gap: 17px; height: 24px; padding-left: 14px; background: #f0f0f0; color: #111; font-size: 12px; }
.tools { display: flex; gap: 1px; height: 28px; padding: 4px 3px; border-bottom: 1px solid #fff; }
.tools button { width: 22px; height: 22px; border: 1px solid #ddd; }
.tools svg { width: 20px; height: 20px; }
.find { display: flex; align-items: center; height: 26px; padding-left: 6px; border-bottom: 1px solid #fff; font-size: 12px; }
.find input { width: 99px; height: 22px; margin: 0 4px 0 6px; background: #646464; border: 1px solid #eee; }
.find span { padding-left: 5px; line-height: 24px; border-left: 1px solid #333; }
.list { flex: 1; min-height: 0; display: flex; margin: 2px 2px 0 1px; background: #fff; }
.scroll { flex: 1; height: 100%; overflow: hidden; }
.head { height: 19px; padding-left: 5px; line-height: 18px; font-size: 12px; font-weight: bold; color: #111; background: #c0c0c0; border: 1px solid #777; border-width: 1px 0; }
.list li { display: flex; height: 18px; line-height: 19px; color: #222; background: #fff; }
.list li svg { margin-left: 1px; }
.list li span { flex: 1; padding-left: 2px; border-left: 1px solid #aaa; }
.list li:nth-child(even) span { background: linear-gradient(90deg, #e2e2e6, #fafafc); }
.list li.on span { color: #e8e8ff; background: linear-gradient(90deg, #10108c, #2c2cb0); }
.vbar { flex: none; width: 17px; display: flex; flex-direction: column; background: #f8f8f8; }
.vbar button, .hbar button { flex: none; width: 17px; height: 17px; padding: 3px; background: #f0f0f0; border: solid #777; border-width: 0 1px 1px 0; }
.vbar svg, .hbar svg { width: 10px; height: 10px; }
.vtrack { flex: 1; display: flex; flex-direction: column; }
.vthumb { height: 55%; margin-top: 234px; background: #f0f0f0; border: solid #777; border-width: 0 1px 2px 0; }
.hbar { flex: none; display: flex; height: 17px; margin: 0 2px 1px 1px; background: #f6f6f6; padding-right: 17px; border-bottom: 1px solid #fff; }
.hthumb { width: 189px; margin-right: auto; background: #efefef; border: solid #777; border-width: 0 1px 1px 0; }
.actions { flex: none; display: flex; justify-content: flex-end; gap: 6px; height: 42px; padding: 6px 12px 12px; border-top: 1px solid #ccc; }
.actions button { width: 75px; height: 23px; padding-right: 3px; border: 1px solid #303030; border-color: #606060 #222 #222 #606060; }
</style>
